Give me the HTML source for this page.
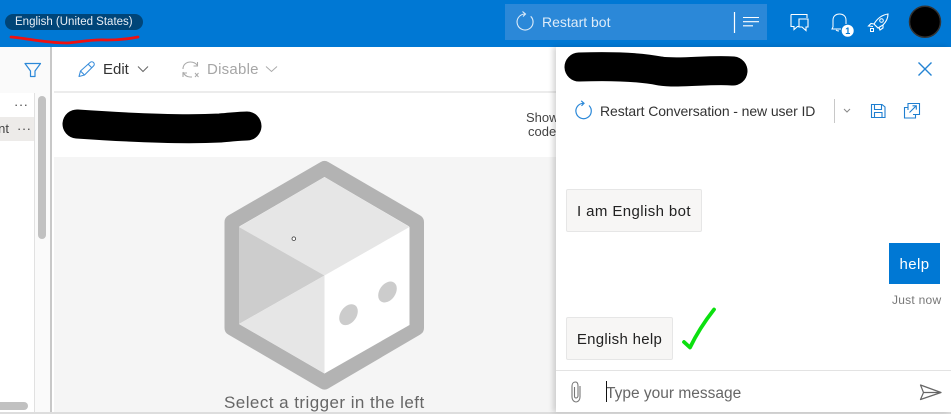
<!DOCTYPE html>
<html><head><meta charset="utf-8">
<style>
html,body{margin:0;padding:0;background:#fff}
#r{position:relative;width:951px;height:414px;overflow:hidden;background:#fff;font-family:"Liberation Sans",sans-serif;color:#222}
#r div{position:absolute;white-space:nowrap}
svg{position:absolute;left:0;top:0}
.b{background:#f7f6f5;border:1px solid #e6e6e6;border-radius:2px;box-sizing:border-box;font-size:15px;color:#222;line-height:43px;text-align:center}
</style></head><body><div id="r">
<div style="left:0;top:0;width:951px;height:47px;background:#0078d4"></div>
<div style="left:5px;top:14px;width:138px;height:16px;background:#004578;border-radius:8px"></div>
<div style="left:15px;top:15px;font-size:11.5px;line-height:15px;color:#e8eef5">English (United States)</div>
<div style="left:505px;top:4px;width:262px;height:36px;background:#2b88d8"></div>
<div style="left:542px;top:14px;font-size:14px;line-height:17px;color:#deecf9">Restart bot</div>

<!-- left panel -->
<div style="left:0;top:47px;width:50px;height:367px;background:#fafafa"></div>
<div style="left:0;top:93px;width:35px;height:319px;background:#fff;border-right:1px solid #e1e1e1;box-sizing:border-box"></div>
<div style="left:0;top:117px;width:34px;height:24px;background:#edebe9"></div>
<div style="left:0;top:121px;font-size:13px;line-height:16px;color:#444;width:9px;overflow:hidden;direction:rtl">nt</div>
<div style="left:14px;top:97px;font-size:13px;line-height:16px;color:#444;letter-spacing:.5px">···</div>
<div style="left:17px;top:121px;font-size:13px;line-height:16px;color:#444;letter-spacing:.5px">···</div>
<div style="left:38px;top:96px;width:8px;height:143px;background:#c1c1c1;border-radius:4px"></div>
<div style="left:0;top:402px;width:28px;height:8px;background:#c1c1c1;border-radius:0 4px 4px 0"></div>
<div style="left:50px;top:47px;width:2px;height:367px;background:#c8c8c8"></div>
<div style="left:0;top:412px;width:951px;height:2px;background:#ddd"></div>

<!-- toolbar -->
<div style="left:54px;top:91px;width:502px;height:2px;background:#ececec"></div>
<div style="left:103px;top:61px;font-size:15px;line-height:18px;color:#333">Edit</div>
<div style="left:207px;top:61px;font-size:15px;line-height:18px;color:#a6a6a6;letter-spacing:.25px">Disable</div>
<div style="left:526px;top:111px;font-size:13px;line-height:14px;color:#444">Show</div>
<div style="left:528px;top:125px;font-size:13px;line-height:14px;color:#444">code</div>

<!-- canvas -->
<div style="left:54px;top:157px;width:502px;height:255px;background:#f5f5f5"></div>
<div style="left:224px;top:393px;font-size:17px;line-height:20px;color:#666;letter-spacing:.45px">Select a trigger in the left</div>

<!-- chat panel -->
<div style="left:556px;top:47px;width:395px;height:365px;background:#fff;box-shadow:-3px 0 5px rgba(0,0,0,.16)"></div>
<div style="left:600px;top:103px;font-size:14px;line-height:17px;color:#333;letter-spacing:-.1px">Restart Conversation - new user ID</div>
<div class="b" style="left:566px;top:189px;width:136px;height:43px;letter-spacing:.4px">I am English bot</div>
<div style="left:889px;top:243px;width:51px;height:41px;background:#0078d4;color:#fff;font-size:15px;line-height:44px;text-align:center;letter-spacing:.4px">help</div>
<div style="left:892px;top:293px;font-size:12px;line-height:15px;color:#777;letter-spacing:.25px">Just now</div>
<div class="b" style="left:566px;top:317px;width:107px;height:43px;letter-spacing:.3px">English help</div>
<div style="left:556px;top:370px;width:395px;height:1px;background:#e3e3e3"></div>
<div style="left:606px;top:384px;font-size:15.5px;line-height:19px;color:#666">Type your message</div>
<div style="left:606px;top:381px;width:1px;height:21px;background:#111"></div>

<svg width="951" height="414" viewBox="0 0 951 414" fill="none">
<!-- red underline -->
<path d="M11 37C25 38 45 43 67 43C80 42 92 39 107 40C118 40 128 39 138 37" stroke="#ee1111" stroke-width="2.800" stroke-linecap="round"/>
<!-- top icons -->
<path d="M530.700 16.300A8 8 0 1 1 524.500 14M522.500 11.500L525.500 14L523 16.500" stroke="#deecf9" stroke-width="1.100"/>
<path d="M734.500 12V33" stroke="#fff" stroke-width="1.200"/>
<path d="M743 17.500H759M743 21.700H759M743 25.800H753" stroke="#fff" stroke-width="1.100"/>
<path d="M791 14.500H807V18M791 14.500V26.500H794V29.500L797.500 26.500H799" stroke="#fff" stroke-width="1.100"/>
<path d="M799 19H808V27H806V30.500L802 27H799Z" stroke="#fff" stroke-width="1.100"/>
<path d="M833 27V20C833 16 836 14 839.500 14C843 14 846 16 846 20V24M833 27L832 29H841M836 30C837 31 838 31 839 31" stroke="#fff" stroke-width="1"/>
<circle cx="847.700" cy="30.700" r="6" fill="#fff"/>
<text x="847.700" y="34" font-family="Liberation Sans" font-size="9" font-weight="bold" fill="#0078d4" text-anchor="middle">1</text>
<path d="M888 14C881 15 877 19 874 24L878 28L883 25C886 22 888 19 888 14ZM874 24L871 23.500L868.500 26L873 26.500M883 25L883 28L880 30L879 27.500" stroke="#fff" stroke-width="1.100"/>
<circle cx="881.500" cy="20.500" r="1.800" stroke="#fff"/>
<path d="M870.500 28.500H873.500V31.500H870.500Z" stroke="#fff"/>
<circle cx="925" cy="21.700" r="15.500" fill="#000" stroke="#333" stroke-width="1.500"/>
<!-- funnel -->
<path d="M25 63.500H40.500L35 71V76.500H30.500V71Z" stroke="#2b88d8" stroke-width="1.200" stroke-linejoin="round"/>
<!-- edit -->
<path d="M79 76.500L80.500 71L90 62.500C91 61.500 92.500 61.500 93.500 62.500C94.500 63.500 94.500 65 93.500 66L84.500 75ZM88.500 64.500L92 68M80.500 71L84.500 75" stroke="#3a8edb" stroke-width="1.100" stroke-linejoin="round"/>
<path d="M138 66.500L143 71.500L148 66.500" stroke="#666" stroke-width="1"/>
<path d="M266 66.500L271.500 71.500L277 66.500" stroke="#aaa" stroke-width="1"/>
<!-- disable -->
<path d="M183 69C183 64 187 62 190.500 62C194 62 196 63.500 197.500 65.500M197.500 62V66H193.500M183 72C184 75 187 77 190 77H192M183 77V73H187" stroke="#aaa" stroke-width="1.100"/>
<path d="M195 73L198.500 77M198.500 73L195 77" stroke="#aaa" stroke-width="1"/>
<!-- scribbles -->
<path d="M77 124C120 127 180 130 220 128C233 127 240 126 247 126" stroke="#000" stroke-width="29" stroke-linecap="round"/>
<path d="M579 67C610 66 640 67 660 71C680 74 710 69 733 71" stroke="#000" stroke-width="29" stroke-linecap="round"/>
<!-- close -->
<path d="M918.500 62.500L931.500 75.500M931.500 62.500L918.500 75.500" stroke="#2584d3" stroke-width="1.400"/>
<!-- chat toolbar -->
<path d="M589 105.500A7.700 7.700 0 1 1 583 103.300M581.200 100.800L584 103.300L581.500 105.800" stroke="#2b88d8" stroke-width="1.200"/>
<path d="M834.500 99V123" stroke="#c8c8c8"/>
<path d="M844 109L847 112L850 109" stroke="#888"/>
<path d="M871.500 104.500H882L885 107V117.500H871.500ZM874.500 104.500V109.500H881.500V104.500M874.500 117.500V112.500H882V117.500" stroke="#1f7fd0" stroke-width="1.100"/>
<path d="M908 107.500H904.500V118H915.500V114.500M908 110V103.500H919.500V114.500H913M909.500 112.500L916 106M912.500 105.800H916.300V109.600" stroke="#1f7fd0" stroke-width="1.100"/>
<!-- hexagon -->
<path d="M324.500 168.500L416.500 222V328L324.500 382L232 328V222Z" stroke="#b3b3b3" stroke-width="15" stroke-linejoin="round"/>
<path d="M324.500 177L409.500 227V325L324.500 373.500L239 324V227Z" fill="#fff"/>
<path d="M324.500 177L409.500 227L324.500 275.500L239 227Z" fill="#e6e6e6"/>
<path d="M239 227L324.500 275.500L239 324Z" fill="#cdcdcd"/>
<path d="M239 324L324.500 275.500V373.500Z" fill="#e6e6e6"/>
<ellipse cx="348.500" cy="314.700" rx="8" ry="11.500" transform="rotate(35 348.500 314.700)" fill="#ccc"/>
<ellipse cx="387.500" cy="292" rx="8" ry="11.500" transform="rotate(35 387.500 292)" fill="#ccc"/>
<circle cx="293.800" cy="238.700" r="1.800" stroke="#333" stroke-width=".8" fill="#fff"/>
<!-- green check -->
<path d="M684 342L690 347.500C697 333 705 321 714 309.500" stroke="#0be00f" stroke-width="3.800" stroke-linecap="round" stroke-linejoin="round"/>
<!-- clip -->
<path d="M580 386V397C580 400 578 402 576 402C574 402 572 400 572 397V386C572 383.500 573.500 382 575.500 382C577.500 382 578 383.500 578 386V396C578 397 577 398 576 398C575 398 574.500 397 574.500 396V387" stroke="#777" stroke-width="1.100"/>
<!-- send -->
<path d="M920.500 385L941 392.500L920.500 399.500L923.500 392.500ZM923.500 392.500H941" stroke="#666" stroke-width="1.200" stroke-linejoin="round"/>
</svg>
</div></body></html>
